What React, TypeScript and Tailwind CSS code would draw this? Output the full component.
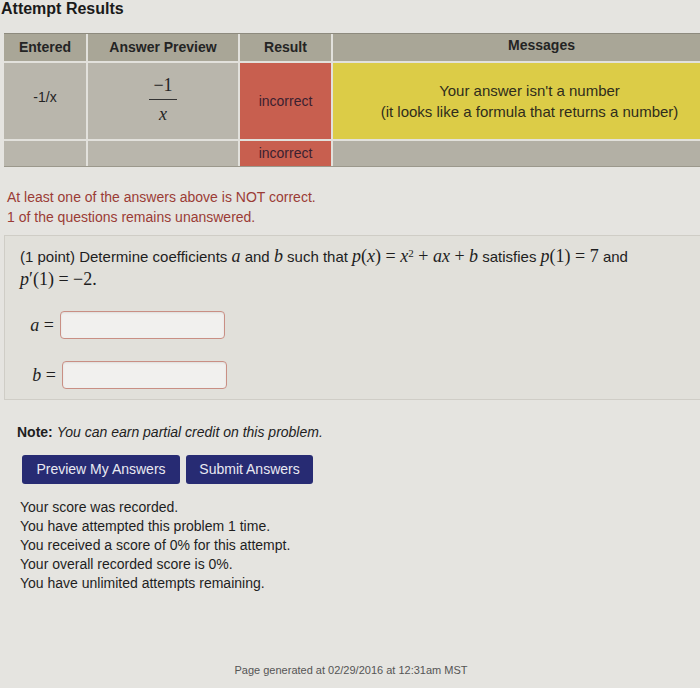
import React from "react";

// ─── Small pieces ────────────────────────────────────

const sans = { fontFamily: '"Liberation Sans", Arial, sans-serif' };
const serif = { fontFamily: '"Liberation Serif", "Times New Roman", serif' };

function M({ children }: { children: React.ReactNode }) {
  return (
    <span className="italic text-[18px]" style={serif}>
      {children}
    </span>
  );
}

function R({ children }: { children: React.ReactNode }) {
  return (
    <span className="text-[18px]" style={serif}>
      {children}
    </span>
  );
}

function AnswerBox() {
  return (
    <div className="h-[28px] w-[165px] rounded-[4px] border border-[#c98f84] bg-[#f1f0ee] shadow-[inset_0_1px_2px_rgba(0,0,0,0.08)]" />
  );
}

function Btn({ label, w }: { label: string; w: string }) {
  return (
    <button
      className={`h-[29px] ${w} rounded-[3px] bg-[#272b73] text-[14px] text-[#e9e9f2]`}
      style={sans}
    >
      {label}
    </button>
  );
}

// ─── Attempt table ───────────────────────────────────

function AttemptTable() {
  const cell = "border-r-2 border-[#e2e1dc] flex items-center justify-center";
  return (
    <div className="ml-[4px] border-t border-[#8d8a7e] text-[14px] text-[#242424]">
      <div className="grid grid-cols-[84px_152px_93px_1fr] h-[29px] bg-[#a9a697] font-bold border-b-2 border-[#e2e1dc]">
        <div className={cell}>Entered</div>
        <div className={cell}>Answer Preview</div>
        <div className={cell}>Result</div>
        <div className="flex items-center justify-center pl-[50px] -mt-[5px]">Messages</div>
      </div>
      <div className="grid grid-cols-[84px_152px_93px_1fr] h-[78px] border-b-2 border-[#e2e1dc]">
        <div className={`${cell} bg-[#b9b6ac]`}>
          <span className="-mt-[8px]">-1/x</span>
        </div>
        <div className={`${cell} bg-[#b9b6ac]`}>
          <div className="flex flex-col items-center -mt-[2px]" style={serif}>
            <span className="text-[18px] leading-[20px] px-[4px] border-b border-[#333] pb-[4px]">−1</span>
            <span className="italic text-[18px] leading-[24px] pt-[2px]">x</span>
          </div>
        </div>
        <div className={`${cell} bg-[#c85f4f] text-[#3b2130]`}>incorrect</div>
        <div className="bg-[#dccc47] flex flex-col items-center justify-center pl-[26px] leading-[21px] text-[15px] text-[#2f2c1c]">
          <span>Your answer isn't a number</span>
          <span>(it looks like a formula that returns a number)</span>
        </div>
      </div>
      <div className="grid grid-cols-[84px_152px_93px_1fr] h-[26px] border-b border-[#9b988c]">
        <div className={`${cell} bg-[#b9b6ac]`} />
        <div className={`${cell} bg-[#b9b6ac]`} />
        <div className={`${cell} bg-[#c85f4f] text-[#3b2130]`}>incorrect</div>
        <div className="bg-[#b3b0a5]" />
      </div>
    </div>
  );
}

// ─── Page ────────────────────────────────────────────

export default function App() {
  return (
    <div
      className="w-[700px] h-[688px] overflow-hidden bg-[#e5e4e0] text-[#1e1e1e]"
      style={sans}
    >
      <h1 className="text-[16px] font-bold leading-[18px] pl-[1px] text-[#1a1a1a]">
        Attempt Results
      </h1>
      <div className="h-[15px]" />
      <AttemptTable />

      <div className="pl-[7px] pt-[20px] text-[14px] leading-[20px] text-[#9b3c36]">
        <p>At least one of the answers above is NOT correct.</p>
        <p>1 of the questions remains unanswered.</p>
      </div>

      <div className="ml-[4px] mt-[8px] h-[165px] border-t border-l border-b border-[#cfcdc6] bg-[#e1e0da] pl-[15px] pt-[9px]">
        <p className="text-[15px] leading-[22px] text-[#1e1e1e]">
          (1 point) Determine coefficients <M>a</M> and <M>b</M> such that{" "}
          <M>p</M><R>(</R><M>x</M><R>) = </R><M>x</M><sup className="text-[11px]" style={serif}>2</sup>
          <R> + </R><M>ax</M><R> + </R><M>b</M> satisfies <M>p</M><R>(1) = 7</R> and
          <br />
          <M>p</M><R>′(1) = −2.</R>
        </p>
        <div className="mt-[20px] flex items-center gap-[4px]">
          <span className="w-[36px] text-right pr-[2px]"><M>a</M><R> =</R></span>
          <AnswerBox />
        </div>
        <div className="mt-[22px] flex items-center gap-[4px]">
          <span className="w-[38px] text-right pr-[2px]"><M>b</M><R> =</R></span>
          <AnswerBox />
        </div>
      </div>

      <p className="pl-[17px] mt-[23px] text-[14px] leading-[18px]">
        <span className="font-bold">Note:</span>{" "}
        <span className="italic">You can earn partial credit on this problem.</span>
      </p>

      <div className="pl-[22px] mt-[14px] flex gap-[6px]">
        <Btn label="Preview My Answers" w="w-[158px]" />
        <Btn label="Submit Answers" w="w-[127px]" />
      </div>

      <div className="pl-[20px] mt-[14px] text-[14px] leading-[19px] text-[#1e1e1e]">
        <p>Your score was recorded.</p>
        <p>You have attempted this problem 1 time.</p>
        <p>You received a score of 0% for this attempt.</p>
        <p>Your overall recorded score is 0%.</p>
        <p>You have unlimited attempts remaining.</p>
      </div>

      <p className="mt-[69px] text-center text-[11px] text-[#555] pl-[2px]">
        Page generated at 02/29/2016 at 12:31am MST
      </p>
    </div>
  );
}
